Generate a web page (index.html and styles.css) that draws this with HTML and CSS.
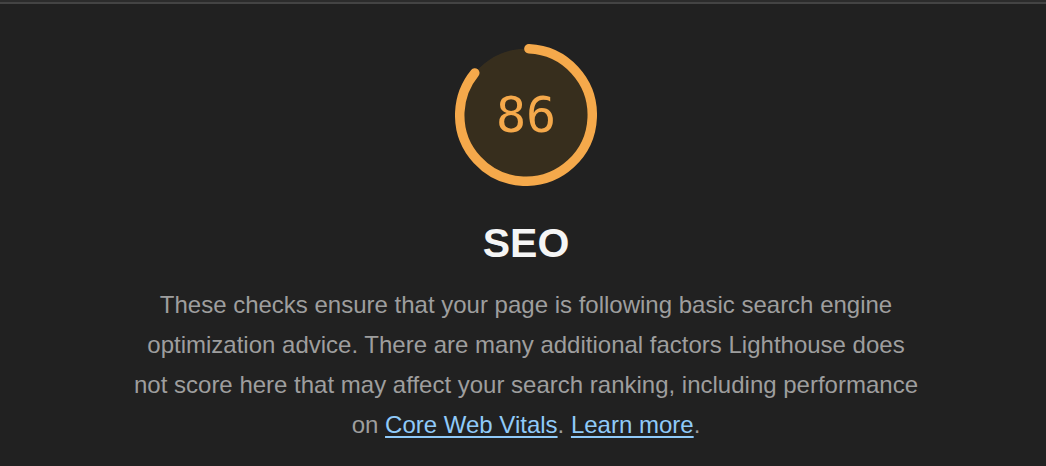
FILE: index.html
```html
<!DOCTYPE html>
<html lang="en">
<head>
<meta charset="utf-8">
<title>SEO</title>
<link rel="stylesheet" href="styles.css">
</head>
<body>
<div class="topbar"></div>
<section class="category">
  <div class="gauge">
    <svg class="gauge-svg" viewBox="0 0 120 120" width="142" height="142">
      <circle class="gauge-base" cx="60" cy="60" r="56" stroke-width="8"></circle>
      <circle class="gauge-arc" cx="60" cy="60" r="56" stroke-width="8"
        stroke-dasharray="299.5 351.86" transform="rotate(-87.5 60 60)"></circle>
    </svg>
    <div class="gauge-score">86</div>
  </div>
  <h2 class="title">SEO</h2>
  <p class="description">These checks ensure that your page is following basic search engine optimization advice. There are many additional factors Lighthouse does not score here that may affect your search ranking, including performance on <a href="#">Core Web Vitals</a>. <a href="#">Learn more</a>.</p>
</section>
</body>
</html>
```

FILE: styles.css
```css
html, body {
  margin: 0;
  padding: 0;
  background: #212121;
}

body {
  font-family: "Liberation Sans", Arial, sans-serif;
  height: 466px;
  overflow: hidden;
}

.topbar {
  height: 2px;
  background: #2c2c2c;
  border-bottom: 2px solid #444444;
}

.category {
  display: flex;
  flex-direction: column;
  align-items: center;
  padding: 40px 0 0 6px;
}

.gauge {
  position: relative;
  width: 142px;
  height: 142px;
}

.gauge-svg {
  display: block;
}

.gauge-base {
  fill: rgba(255, 164, 0, 0.1);
  stroke: none;
}

.gauge-arc {
  fill: none;
  stroke: #f5a94b;
  stroke-linecap: round;
}

.gauge-score {
  position: absolute;
  inset: 0;
  display: flex;
  align-items: center;
  justify-content: center;
  font-family: "DejaVu Sans Mono", Menlo, monospace;
  font-size: 50px;
  color: #f5a94b;
}

.title {
  margin: 33px 0 0;
  font-size: 41px;
  line-height: 48px;
  font-weight: bold;
  color: #f5f5f5;
}

.description {
  margin: 18px 0 0;
  max-width: 790px;
  text-align: center;
  font-size: 24px;
  line-height: 40px;
  color: #9e9e9e;
}

.description a {
  color: #90caf9;
  text-decoration: underline;
  text-underline-offset: 3px;
}
```
